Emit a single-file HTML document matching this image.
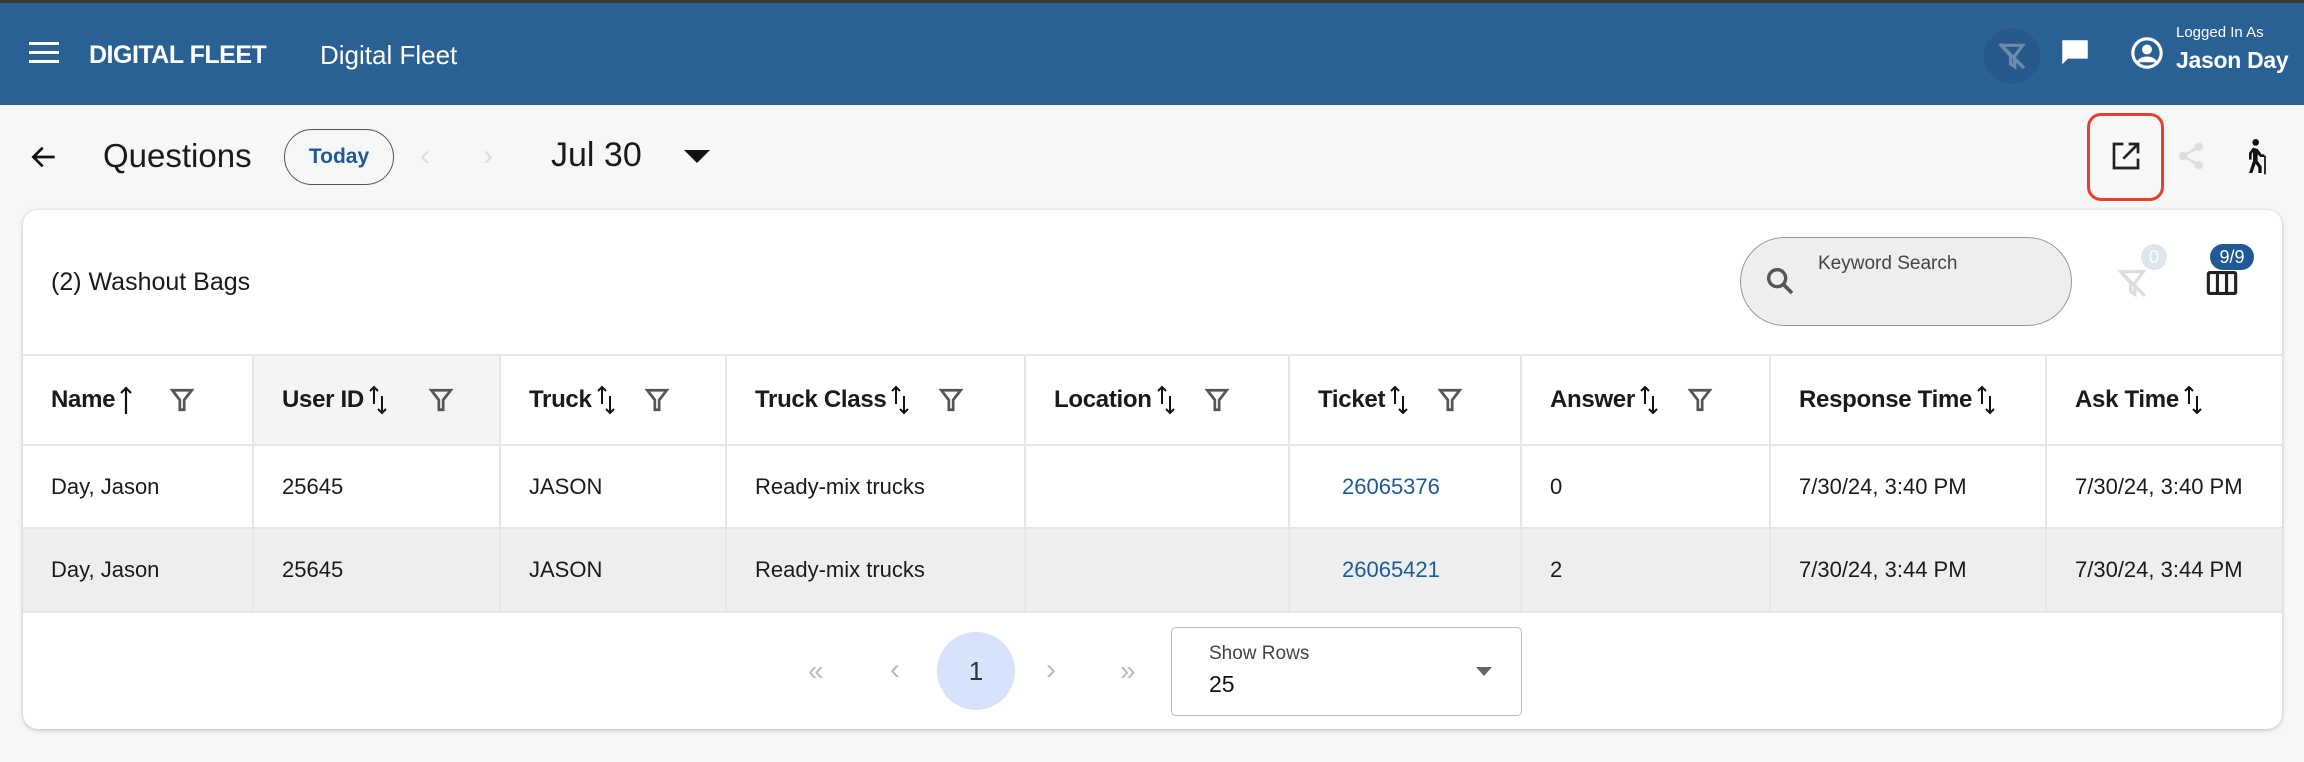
<!DOCTYPE html>
<html><head><meta charset="utf-8"><style>
*{box-sizing:border-box;margin:0;padding:0}
body{width:2304px;height:762px;background:#f6f7f7;font-family:"Liberation Sans",Arial,sans-serif;position:relative;overflow:hidden;color:#1a1a1a}
.a{position:absolute}
.hdr{left:0;top:0;width:2304px;height:105px;background:#2a6194;border-top:3px solid #3a3a3a}
.card{left:23px;top:210px;width:2259px;height:519px;background:#fff;border-radius:15px;box-shadow:0 1px 4px rgba(0,0,0,.25);overflow:hidden}
.th{position:absolute;top:144px;height:90px;border-right:2px solid #e6e6e6;border-top:2px solid #e6e6e6;font-size:24px;font-weight:bold;display:flex;align-items:center;padding-left:28px;letter-spacing:-0.3px}
.td{position:absolute;height:84px;border-right:2px solid #e6e6e6;border-top:2px solid #e6e6e6;font-size:22px;display:flex;align-items:center;padding-left:28px}
.lnk{color:#1f5a96}
svg{display:block}
.s{margin-left:4px}
</style></head><body>
<svg width="0" height="0" style="position:absolute"><defs>
<symbol id="srt" viewBox="0 0 20 32"><path d="M6 20V3M2 7l4-4 4 4" fill="none" stroke="#111" stroke-width="2"/><path d="M14 12v17M10 25l4 4 4-4" fill="none" stroke="#111" stroke-width="2"/></symbol>
<symbol id="flt" viewBox="0 0 24 24"><path d="M3 3h18l-7 9v9h-4v-9z" fill="none" stroke="#555" stroke-width="2.5"/></symbol>
</defs></svg>
<div class="a hdr"></div>
<div class="a" style="left:29px;top:42px;width:30px;height:3px;background:#fff"></div>
<div class="a" style="left:29px;top:51px;width:30px;height:3px;background:#fff"></div>
<div class="a" style="left:29px;top:60px;width:30px;height:3px;background:#fff"></div>
<div class="a" style="left:89px;top:41px;color:#fff;font-size:25px;font-weight:900;letter-spacing:-0.5px">DIGITAL FLEET</div>
<div class="a" style="left:320px;top:40px;color:#fff;font-size:26px">Digital Fleet</div>
<div class="a" style="left:1984px;top:28px;width:56px;height:56px;border-radius:50%;background:#275a8a"></div>
<svg class="a" style="left:1996px;top:40px" width="32" height="32" viewBox="0 0 24 24"><path d="M4 4h16l-6 8v8l-3-2v-6z" fill="none" stroke="#6d8cab" stroke-width="2.4"/><path d="M3 3l18 18" stroke="#6d8cab" stroke-width="2.4"/></svg>
<svg class="a" style="left:2058px;top:36px" width="34" height="34" viewBox="0 0 24 24"><path d="M3 3h18v13H7l-4 4z" fill="#fff"/></svg>
<svg class="a" style="left:2130px;top:36px" width="34" height="34" viewBox="0 0 24 24"><circle cx="12" cy="12" r="10" fill="none" stroke="#fff" stroke-width="2.2"/><circle cx="12" cy="9.5" r="3.5" fill="#fff"/><path d="M5.5 18.5c3.5-4 9.5-4 13 0" fill="#fff" stroke="#fff" stroke-width="2"/></svg>
<div class="a" style="left:2176px;top:24px;color:#fff;font-size:15px">Logged In As</div>
<div class="a" style="left:2176px;top:47px;color:#fff;font-size:23px;font-weight:bold;letter-spacing:-0.3px">Jason Day</div>

<svg class="a" style="left:28px;top:141px" width="32" height="32" viewBox="0 0 24 24"><path d="M20 12H5M11 5l-7 7 7 7" fill="none" stroke="#111" stroke-width="2"/></svg>
<div class="a" style="left:103px;top:137px;font-size:33px">Questions</div>
<div class="a" style="left:284px;top:129px;width:110px;height:56px;border:1.5px solid #555;border-radius:28px;color:#1f5a96;font-size:21px;font-weight:bold;text-align:center;line-height:53px">Today</div>
<div class="a" style="left:420px;top:139px;color:#ddd;font-size:30px">‹</div>
<div class="a" style="left:483px;top:139px;color:#ddd;font-size:30px">›</div>
<div class="a" style="left:551px;top:136px;font-size:34px">Jul 30</div>
<div class="a" style="left:684px;top:150px;width:0;height:0;border-left:13px solid transparent;border-right:13px solid transparent;border-top:13px solid #111"></div>
<div class="a" style="left:2087px;top:113px;width:77px;height:88px;border:3px solid #e8402b;border-radius:14px"></div>
<svg class="a" style="left:2110px;top:140px" width="32" height="32" viewBox="0 0 24 24"><path d="M10 3H3v18h18v-7" fill="none" stroke="#222" stroke-width="2"/><path d="M14 3h7v7M21 3L10 14" fill="none" stroke="#222" stroke-width="2"/></svg>
<svg class="a" style="left:2175px;top:140px" width="32" height="32" viewBox="0 0 24 24"><circle cx="18" cy="5" r="3" fill="#ddd"/><circle cx="6" cy="12" r="3" fill="#ddd"/><circle cx="18" cy="19" r="3" fill="#ddd"/><path d="M18 5L6 12l12 7" fill="none" stroke="#ddd" stroke-width="2"/></svg>
<svg class="a" style="left:2241px;top:138px" width="32" height="38" viewBox="0 0 24 28"><circle cx="11" cy="3" r="2.5" fill="#111"/><path d="M9 7l-3 4v5h2v-4l1-2v7l-3 9h2.5l2.5-7 2 3v4h2.5v-5l-3-4v-5l2 2h3v-2h-2l-3-4z" fill="#111"/><path d="M18 13v14" stroke="#111" stroke-width="1.3"/></svg>

<div class="a card">
  <div class="a" style="left:28px;top:58px;font-size:25px">(2) Washout Bags</div>
  <div class="a" style="left:1717px;top:27px;width:332px;height:89px;border:1.5px solid #999;border-radius:45px;background:#eceef0"></div>
  <svg class="a" style="left:1740px;top:54px" width="34" height="34" viewBox="0 0 24 24"><circle cx="10" cy="10" r="6" fill="none" stroke="#555" stroke-width="2.4"/><path d="M14.5 14.5l6 6" stroke="#555" stroke-width="2.6"/></svg>
  <div class="a" style="left:1795px;top:43px;font-size:19px;color:#444">Keyword Search</div>
  <svg class="a" style="left:2092px;top:56px" width="34" height="34" viewBox="0 0 24 24"><path d="M4 4h16l-6 8v8l-3-2v-6z" fill="none" stroke="#ddd" stroke-width="2.2"/><path d="M3 3l18 18" stroke="#ddd" stroke-width="2.2"/></svg>
  <div class="a" style="left:2118px;top:34px;width:26px;height:26px;border-radius:50%;background:#dde6ef;color:#fff;font-size:18px;text-align:center;line-height:26px">0</div>
  <svg class="a" style="left:2183px;top:60px" width="32" height="26" viewBox="0 0 24 20"><rect x="1.5" y="2" width="21" height="16" rx="1" fill="none" stroke="#222" stroke-width="2.4"/><path d="M8.5 2v16M15.5 2v16" stroke="#222" stroke-width="2.4"/></svg>
  <div class="a" style="left:2187px;top:34px;width:44px;height:26px;border-radius:13px;background:#1f5a96;color:#fff;font-size:18px;text-align:center;line-height:26px">9/9</div>

  <div class="th" style="left:0;width:231px">Name<svg class="s" width="14" height="32" viewBox="0 0 12 32"><path d="M6 30V4M1 9l5-5 5 5" fill="none" stroke="#111" stroke-width="2.2"/></svg><svg style="margin-left:36px" width="26" height="28"><use href="#flt"/></svg></div>
  <div class="th" style="left:231px;width:247px;background:#f4f4f4">User ID<svg class="s" width="20" height="32"><use href="#srt"/></svg><svg style="margin-left:40px" width="26" height="28"><use href="#flt"/></svg></div>
  <div class="th" style="left:478px;width:226px">Truck<svg class="s" width="20" height="32"><use href="#srt"/></svg><svg style="margin-left:28px" width="26" height="28"><use href="#flt"/></svg></div>
  <div class="th" style="left:704px;width:299px">Truck Class<svg class="s" width="20" height="32"><use href="#srt"/></svg><svg style="margin-left:28px" width="26" height="28"><use href="#flt"/></svg></div>
  <div class="th" style="left:1003px;width:264px">Location<svg class="s" width="20" height="32"><use href="#srt"/></svg><svg style="margin-left:28px" width="26" height="28"><use href="#flt"/></svg></div>
  <div class="th" style="left:1267px;width:232px">Ticket<svg class="s" width="20" height="32"><use href="#srt"/></svg><svg style="margin-left:28px" width="26" height="28"><use href="#flt"/></svg></div>
  <div class="th" style="left:1499px;width:249px">Answer<svg class="s" width="20" height="32"><use href="#srt"/></svg><svg style="margin-left:28px" width="26" height="28"><use href="#flt"/></svg></div>
  <div class="th" style="left:1748px;width:276px">Response Time<svg class="s" width="20" height="32"><use href="#srt"/></svg></div>
  <div class="th" style="left:2024px;width:235px;border-right:none">Ask Time<svg class="s" width="20" height="32"><use href="#srt"/></svg></div>

  <div class="td" style="top:234px;left:0;width:231px">Day, Jason</div>
  <div class="td" style="top:234px;left:231px;width:247px">25645</div>
  <div class="td" style="top:234px;left:478px;width:226px">JASON</div>
  <div class="td" style="top:234px;left:704px;width:299px">Ready-mix trucks</div>
  <div class="td" style="top:234px;left:1003px;width:264px"></div>
  <div class="td lnk" style="top:234px;left:1267px;width:232px;padding-left:52px">26065376</div>
  <div class="td" style="top:234px;left:1499px;width:249px">0</div>
  <div class="td" style="top:234px;left:1748px;width:276px">7/30/24, 3:40 PM</div>
  <div class="td" style="top:234px;left:2024px;width:235px;border-right:none">7/30/24, 3:40 PM</div>

  <div class="a" style="top:317px;left:0;width:2259px;height:84px;background:#eceef0"></div>
  <div class="td" style="top:317px;left:0;width:231px">Day, Jason</div>
  <div class="td" style="top:317px;left:231px;width:247px">25645</div>
  <div class="td" style="top:317px;left:478px;width:226px">JASON</div>
  <div class="td" style="top:317px;left:704px;width:299px">Ready-mix trucks</div>
  <div class="td" style="top:317px;left:1003px;width:264px"></div>
  <div class="td lnk" style="top:317px;left:1267px;width:232px;padding-left:52px">26065421</div>
  <div class="td" style="top:317px;left:1499px;width:249px">2</div>
  <div class="td" style="top:317px;left:1748px;width:276px">7/30/24, 3:44 PM</div>
  <div class="td" style="top:317px;left:2024px;width:235px;border-right:none">7/30/24, 3:44 PM</div>
  <div class="a" style="top:401px;left:0;width:2259px;height:2px;background:#e6e6e6"></div>

  <div class="a" style="left:785px;top:445px;color:#bbb;font-size:28px">«</div>
  <div class="a" style="left:867px;top:443px;color:#bbb;font-size:30px">‹</div>
  <div class="a" style="left:914px;top:422px;width:78px;height:78px;border-radius:50%;background:#d6e3fb;text-align:center;line-height:78px;font-size:26px;color:#333">1</div>
  <div class="a" style="left:1023px;top:443px;color:#bbb;font-size:30px">›</div>
  <div class="a" style="left:1097px;top:445px;color:#bbb;font-size:28px">»</div>
  <div class="a" style="left:1148px;top:417px;width:351px;height:89px;border:1.5px solid #bbb;border-radius:5px"></div>
  <div class="a" style="left:1186px;top:433px;font-size:19px;color:#444">Show Rows</div>
  <div class="a" style="left:1186px;top:461px;font-size:23px;color:#111">25</div>
  <div class="a" style="left:1453px;top:457px;width:0;height:0;border-left:8px solid transparent;border-right:8px solid transparent;border-top:9px solid #666"></div>
</div>
</body></html>
